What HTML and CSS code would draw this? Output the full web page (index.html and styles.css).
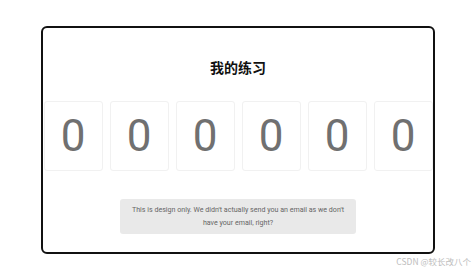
FILE: index.html
```html
<!DOCTYPE html>
<html lang="zh">
<head>
<meta charset="utf-8">
<title>我的练习</title>
<link rel="stylesheet" href="styles.css">
</head>
<body>
<main class="page">
  <section class="card">
    <h1 class="title">我的练习</h1>
    <div class="digits">
      <div class="digit">0</div>
      <div class="digit">0</div>
      <div class="digit">0</div>
      <div class="digit">0</div>
      <div class="digit">0</div>
      <div class="digit">0</div>
    </div>
    <p class="note">This is design only. We didn't actually send you an email as we don't have your email, right?</p>
  </section>
</main>
<div class="watermark">CSDN @较长改八个</div>
</body>
</html>
```

FILE: styles.css
```css
html, body {
  margin: 0;
  padding: 0;
  background: #fff;
}
body {
  width: 474px;
  height: 270px;
  overflow: hidden;
  position: relative;
  font-family: Roboto, "Noto Sans CJK SC", sans-serif;
}
.page {
  padding: 26px 0 0 41px;
}
.card {
  box-sizing: border-box;
  width: 394px;
  height: 228px;
  border: 2px solid #111;
  border-radius: 6px;
  display: flex;
  flex-direction: column;
  align-items: center;
  padding-top: 29px;
  overflow: hidden;
}
.title {
  margin: 0;
  font-family: "Noto Sans CJK SC", sans-serif;
  font-size: 14px;
  line-height: 20px;
  font-weight: 700;
  color: #111;
}
.digits {
  display: flex;
  gap: 7px;
  margin-top: 24px;
}
.digit {
  box-sizing: border-box;
  width: 59px;
  height: 70px;
  border: 1px solid #f1f1f1;
  border-radius: 3px;
  display: flex;
  align-items: center;
  justify-content: center;
  font-family: Roboto, sans-serif;
  font-size: 44px;
  color: #707070;
}
.note {
  box-sizing: border-box;
  width: 236px;
  margin: 28px 0 0;
  padding: 5px 11px;
  background: #e9e9e9;
  border-radius: 3px;
  font-size: 7.1px;
  line-height: 12.5px;
  color: #666;
  text-align: center;
}
.watermark {
  position: absolute;
  right: 3px;
  top: 255px;
  font-family: "Noto Sans CJK SC", sans-serif;
  font-size: 8.5px;
  line-height: 12px;
  color: #bdbdbd;
}
```
